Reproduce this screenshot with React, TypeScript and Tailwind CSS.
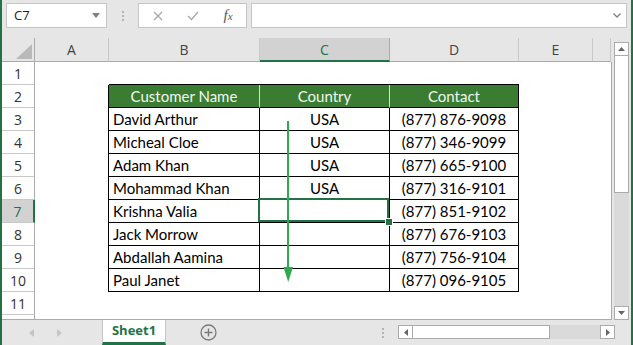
import React from "react";

const GREEN = "#217346";

const customers = [
  ["David Arthur", "USA", "(877) 876-9098"],
  ["Micheal Cloe", "USA", "(877) 346-9099"],
  ["Adam Khan", "USA", "(877) 665-9100"],
  ["Mohammad Khan", "USA", "(877) 316-9101"],
  ["Krishna Valia", "", "(877) 851-9102"],
  ["Jack Morrow", "", "(877) 676-9103"],
  ["Abdallah Aamina", "", "(877) 756-9104"],
  ["Paul Janet", "", "(877) 096-9105"],
];

const FormulaBar = () => (
  <div className="h-[38px] flex items-start pt-[3px] pl-[4px] shrink-0">
    <div className="w-[101px] h-[25px] bg-white border border-[#c6c6c6] flex items-center justify-between pl-[7px] pr-[6px]">
      <span className="text-[13px] text-[#222] font-['Open_Sans',sans-serif]">C7</span>
      <svg width="8" height="5" viewBox="0 0 8 5">
        <path d="M0 0 L8 0 L4 5 Z" fill="#808080" />
      </svg>
    </div>
    <div className="w-[31px] h-[25px] flex flex-col items-center justify-center gap-[2px]">
      <div className="w-[2px] h-[2px] bg-[#b4b4b4]" />
      <div className="w-[2px] h-[2px] bg-[#b4b4b4]" />
      <div className="w-[2px] h-[2px] bg-[#b4b4b4]" />
    </div>
    <div className="w-[109px] h-[25px] bg-white border border-[#c6c6c6] flex items-center">
      <div className="w-[37px] flex justify-center">
        <svg width="10" height="10" viewBox="0 0 10 10">
          <path d="M1 1 L9 9 M9 1 L1 9" stroke="#a8a8a8" strokeWidth="1.3" />
        </svg>
      </div>
      <div className="w-[34px] flex justify-center">
        <svg width="12" height="10" viewBox="0 0 12 10">
          <path d="M1 5 L4.5 8.5 L11 1" stroke="#a8a8a8" strokeWidth="1.4" fill="none" />
        </svg>
      </div>
      <div className="w-[36px] flex justify-center">
        <span className="italic text-[15px] text-[#555] font-['Liberation_Serif',serif] leading-none">
          f<span className="text-[11px]">x</span>
        </span>
      </div>
    </div>
    <div className="ml-[4px] w-[376px] h-[25px] bg-white border border-[#c6c6c6] flex items-center justify-end pr-[5px]">
      <svg width="8" height="5" viewBox="0 0 8 5">
        <path d="M0.5 0.5 L4 4 L7.5 0.5" stroke="#808080" strokeWidth="1.3" fill="none" />
      </svg>
    </div>
  </div>
);

const colWidths = ["w-[74px]", "w-[151px]", "w-[130px]", "w-[129px]", "w-[74px]", "w-[18px]"];
const letters = ["A", "B", "C", "D", "E", ""];

const HeaderRow = () => (
  <div className="h-[24px] flex font-['Open_Sans',sans-serif] text-[14px] text-[#444] shrink-0">
    <div className="w-[33px] h-full border-r border-b border-[#ababab] relative">
      <svg className="absolute right-[2px] bottom-[2px]" width="16" height="15" viewBox="0 0 16 15">
        <path d="M16 0 L16 15 L0 15 Z" fill="#b9b9b9" />
      </svg>
    </div>
    {letters.map((l, i) =>
      l === "C" ? (
        <div
          key={i}
          className={`${colWidths[i]} h-full bg-[#d2d2d2] border-r border-[#ababab] border-b-2 border-b-[#217346] text-[#217346] flex items-center justify-center`}
        >
          {l}
        </div>
      ) : (
        <div
          key={i}
          className={`${colWidths[i]} h-full border-r border-[#c8c8c8] border-b border-b-[#ababab] flex items-center justify-center`}
        >
          {l}
        </div>
      )
    )}
  </div>
);

const RowHeader = ({ n }: { n: number }) =>
  n === 7 ? (
    <div className="w-[33px] h-full bg-[#d2d2d2] border-r-2 border-[#217346] border-b border-b-[#c8c8c8] flex items-center justify-center text-[#217346]">
      {n}
    </div>
  ) : (
    <div className="w-[33px] h-full border-r border-[#ababab] border-b border-b-[#c8c8c8] flex items-center justify-center">
      {n <= 11 ? n : null}
    </div>
  );

const SheetRow = ({ n }: { n: number }) => {
  const inTable = n >= 2 && n <= 10;
  const isHead = n === 2;
  const data = n >= 3 && n <= 10 ? customers[n - 3] : null;
  const topEdge = n === 1 ? "border-b border-black" : "";
  return (
    <div className="h-[23px] flex shrink-0">
      <div className="font-['Open_Sans',sans-serif] text-[14px] text-[#333] h-full">
        <RowHeader n={n} />
      </div>
      <div className={`w-[74px] h-full ${inTable ? "border-r border-black" : ""}`} />
      {inTable ? (
        isHead ? (
          <>
            <div className="w-[151px] h-full bg-[#3a7d32] border-r border-[#cfe0cb] border-b border-b-black flex items-center justify-center text-[#f2f7f0]">
              Customer Name
            </div>
            <div className="w-[130px] h-full bg-[#3a7d32] border-r border-[#cfe0cb] border-b border-b-black flex items-center justify-center text-[#f2f7f0]">
              Country
            </div>
            <div className="w-[129px] h-full bg-[#3a7d32] border-r border-black border-b flex items-center justify-center text-[#f2f7f0]">
              Contact
            </div>
          </>
        ) : (
          <>
            <div className="w-[151px] h-full border-r border-b border-black flex items-center pl-[4px] text-black">
              {data?.[0]}
            </div>
            <div className="w-[130px] h-full border-r border-b border-black flex items-center justify-center text-black relative">
              {data?.[1]}
              {n === 7 && (
                <div className="absolute -left-[2px] -top-[2px] right-0 bottom-0 border-2 border-[#217346] z-10">
                  <div className="absolute -right-[5px] -bottom-[5px] w-[6px] h-[6px] bg-[#217346] outline outline-white z-30" />
                </div>
              )}
            </div>
            <div className="w-[129px] h-full border-r border-b border-black flex items-center justify-center text-black">
              {data?.[2]}
            </div>
          </>
        )
      ) : (
        <>
          <div className={`w-[151px] h-full ${topEdge}`} />
          <div className={`w-[130px] h-full ${topEdge}`} />
          <div className={`w-[129px] h-full ${topEdge}`} />
        </>
      )}
      <div className="w-[74px] h-full" />
      <div className="w-[18px] h-full" />
    </div>
  );
};

const VScroll = () => (
  <div className="w-[15px] mt-[4px] h-[278px] flex flex-col bg-[#dadada]">
    <div className="h-[14px] bg-white border border-[#ababab] flex items-center justify-center">
      <svg width="7" height="4" viewBox="0 0 7 4">
        <path d="M0 4 L7 4 L3.5 0 Z" fill="#666" />
      </svg>
    </div>
    <div className="h-[137px] bg-white border border-t-0 border-[#ababab]" />
    <div className="flex-1" />
    <div className="h-[14px] bg-white border border-[#ababab] flex items-center justify-center">
      <svg width="7" height="4" viewBox="0 0 7 4">
        <path d="M0 0 L7 0 L3.5 4 Z" fill="#666" />
      </svg>
    </div>
  </div>
);

const TabBar = () => (
  <div className="h-[25px] flex items-stretch shrink-0">
    <div className="w-[100px] flex items-center">
      <svg className="ml-[27px]" width="5" height="8" viewBox="0 0 5 8">
        <path d="M5 0 L5 8 L0 4 Z" fill="#c4c4c4" />
      </svg>
      <svg className="ml-[23px]" width="5" height="8" viewBox="0 0 5 8">
        <path d="M0 0 L0 8 L5 4 Z" fill="#c4c4c4" />
      </svg>
    </div>
    <div className="w-[64px] bg-white border-x border-[#c6c6c6] border-b-[3px] border-b-[#217346] flex items-center justify-center">
      <span className="font-['Open_Sans',sans-serif] font-bold text-[13px] text-[#217346]">Sheet1</span>
    </div>
    <div className="w-[232px] flex items-center">
      <svg className="ml-[34px]" width="17" height="17" viewBox="0 0 17 17">
        <circle cx="8.5" cy="8.5" r="7.5" stroke="#7a7a7a" strokeWidth="1.3" fill="none" />
        <path d="M8.5 4.5 V12.5 M4.5 8.5 H12.5" stroke="#7a7a7a" strokeWidth="1.4" />
      </svg>
      <div className="ml-auto mr-[14px] flex flex-col gap-[2px]">
        <div className="w-[2px] h-[2px] bg-[#b4b4b4]" />
        <div className="w-[2px] h-[2px] bg-[#b4b4b4]" />
        <div className="w-[2px] h-[2px] bg-[#b4b4b4]" />
      </div>
    </div>
    <div className="flex items-center pb-[1px]">
      <div className="w-[15px] h-[14px] bg-white border border-[#ababab] flex items-center justify-center">
        <svg width="4" height="7" viewBox="0 0 4 7">
          <path d="M4 0 L4 7 L0 3.5 Z" fill="#666" />
        </svg>
      </div>
      <div className="w-[137px] h-[14px] bg-white border border-l-0 border-[#ababab]" />
      <div className="w-[50px] h-[14px] bg-[#dadada]" />
      <div className="w-[15px] h-[14px] bg-white border border-[#ababab] flex items-center justify-center">
        <svg width="4" height="7" viewBox="0 0 4 7">
          <path d="M0 0 L0 7 L4 3.5 Z" fill="#666" />
        </svg>
      </div>
    </div>
  </div>
);

export default function App() {
  const rows = Array.from({ length: 12 }, (_, i) => i + 1);
  return (
    <div
      className="w-[633px] h-[345px] bg-[#e6e6e6] border-x-2 flex flex-col overflow-hidden"
      style={{ borderColor: GREEN }}
    >
      <FormulaBar />
      <div className="flex">
        <div className="w-[610px] flex flex-col">
          <HeaderRow />
          <div className="h-[258px] bg-white border-r border-b border-[#ababab] overflow-hidden relative font-['Lato',sans-serif] text-[15px]">
            {rows.map((n) => (
              <SheetRow key={n} n={n} />
            ))}
            <svg
              className="absolute left-[280px] top-[57px] z-20"
              width="16"
              height="166"
              viewBox="0 0 16 166"
            >
              <path d="M6 2 V150" stroke="#2fa84f" strokeWidth="2" />
              <path d="M1.5 148 L11 148 L6.2 163 Z" fill="#2fa84f" />
            </svg>
          </div>
        </div>
        <div className="w-[2px]" />
        <VScroll />
      </div>
      <TabBar />
    </div>
  );
}
